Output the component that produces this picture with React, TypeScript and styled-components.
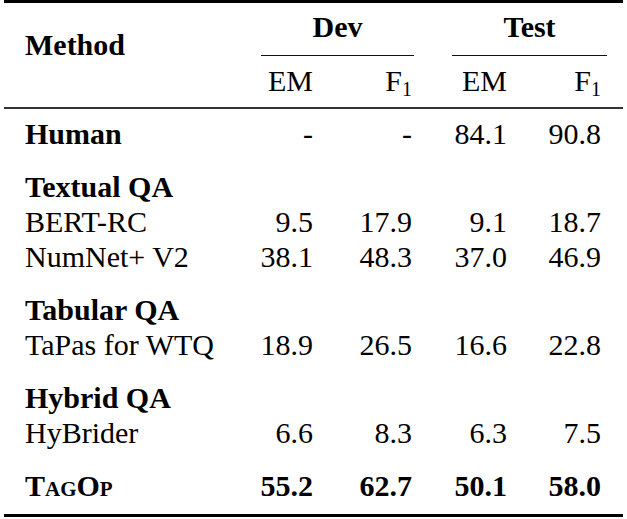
import styled, { createGlobalStyle } from "styled-components";

const GlobalStyle = createGlobalStyle`
  body {
    margin: 0;
    background: #fff;
  }
`;

const COLUMNS = "253px 66px 99px 95px 106px";

const Page = styled.div`
  padding: 0 4px;
  font-family: "Liberation Serif", "Times New Roman", serif;
  font-size: 30px;
  color: #000;
`;

const Table = styled.div`
  width: 619px;
  display: flex;
  flex-direction: column;
  border-top: 3px solid #000;
  border-bottom: 3px solid #000;
  padding-bottom: 11px;
`;

const HeaderGrid = styled.div`
  display: grid;
  grid-template-columns: ${COLUMNS};
  grid-template-rows: auto auto;
  line-height: 35px;
`;

const MethodHead = styled.div`
  grid-row: 1 / span 2;
  grid-column: 1;
  padding: 24px 0 0 21px;
  font-weight: 700;
`;

const GroupHead = styled.div<{ $cols: string; $left: number; $right: number }>`
  grid-row: 1;
  grid-column: ${(p) => p.$cols};
  margin: 0 ${(p) => p.$right}px 0 ${(p) => p.$left}px;
  padding-top: 6px;
  display: flex;
  flex-direction: column;
  align-items: center;
  font-weight: 700;
`;

const CmidRule = styled.div`
  align-self: stretch;
  height: 1px;
  margin-top: 11px;
  background: #111;
`;

const SubHead = styled.div<{ $pad: number }>`
  grid-row: 2;
  padding: 7px ${(p) => p.$pad}px 0 0;
  text-align: right;
`;

const Sub = styled.sub`
  font-size: 20px;
  line-height: 0;
  vertical-align: -5px;
`;

const MidRule = styled.div`
  height: 2px;
  margin-top: 9px;
  background: #333;
`;

const Group = styled.div<{ $first?: boolean }>`
  margin-top: ${(p) => (p.$first ? 7 : 18)}px;
`;

const Row = styled.div`
  display: grid;
  grid-template-columns: ${COLUMNS};
  line-height: 35px;
  white-space: nowrap;
`;

const NameCell = styled.div<{ $bold?: boolean }>`
  padding-left: 21px;
  font-weight: ${(p) => (p.$bold ? 700 : 400)};
`;

const NumCell = styled.div<{ $bold?: boolean; $pad: number }>`
  text-align: right;
  padding-right: ${(p) => p.$pad}px;
  font-weight: ${(p) => (p.$bold ? 700 : 400)};
`;

const SmallCaps = styled.span`
  font-variant: small-caps;
`;

const PADS = [10, 10, 10, 22];

type Entry = { name: React.ReactNode; values?: string[]; bold?: boolean };

const groups: Entry[][] = [
  [{ name: "Human", values: ["-", "-", "84.1", "90.8"], bold: true }],
  [
    { name: "Textual QA", bold: true },
    { name: "BERT-RC", values: ["9.5", "17.9", "9.1", "18.7"] },
    { name: "NumNet+ V2", values: ["38.1", "48.3", "37.0", "46.9"] },
  ],
  [
    { name: "Tabular QA", bold: true },
    { name: "TaPas for WTQ", values: ["18.9", "26.5", "16.6", "22.8"] },
  ],
  [
    { name: "Hybrid QA", bold: true },
    { name: "HyBrider", values: ["6.6", "8.3", "6.3", "7.5"] },
  ],
  [
    {
      name: <SmallCaps>TagOp</SmallCaps>,
      values: ["55.2", "62.7", "50.1", "58.0"],
      bold: true,
    },
  ],
];

function App() {
  return (
    <Page>
      <GlobalStyle />
      <Table>
        <HeaderGrid>
          <MethodHead>Method</MethodHead>
          <GroupHead $cols="2 / 4" $left={4} $right={8}>
            Dev
            <CmidRule />
          </GroupHead>
          <GroupHead $cols="4 / 6" $left={30} $right={16}>
            Test
            <CmidRule />
          </GroupHead>
          {PADS.map((pad, i) => (
            <SubHead key={i} $pad={pad}>
              {i % 2 === 0 ? (
                "EM"
              ) : (
                <>
                  F<Sub>1</Sub>
                </>
              )}
            </SubHead>
          ))}
        </HeaderGrid>
        <MidRule />
        {groups.map((rows, g) => (
          <Group key={g} $first={g === 0}>
            {rows.map((row, r) => (
              <Row key={r}>
                <NameCell $bold={row.bold}>{row.name}</NameCell>
                {row.values?.map((v, i) => (
                  <NumCell key={i} $pad={PADS[i]} $bold={row.bold && g > 0}>
                    {v}
                  </NumCell>
                ))}
              </Row>
            ))}
          </Group>
        ))}
      </Table>
    </Page>
  );
}

export default App;
